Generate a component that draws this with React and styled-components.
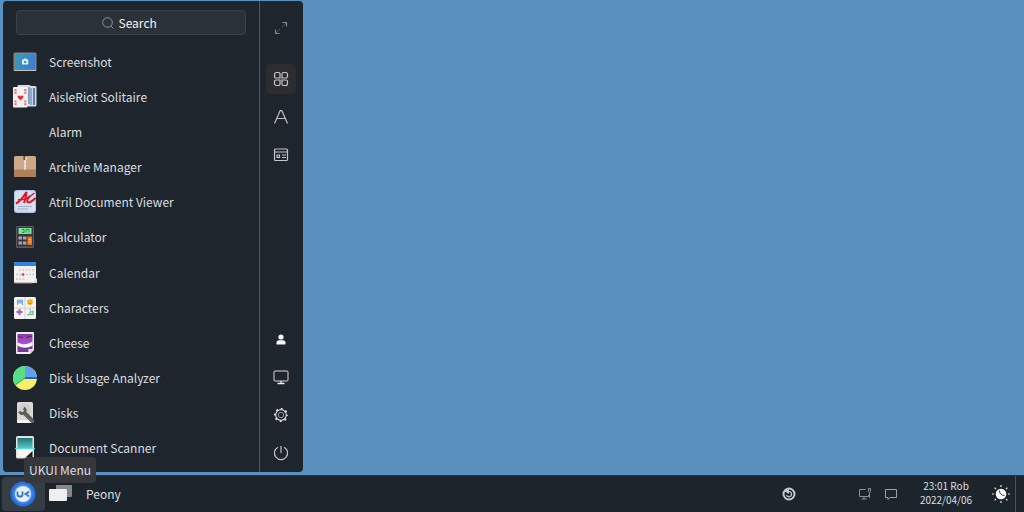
import React from "react";
import styled, { createGlobalStyle } from "styled-components";

const GlobalStyle = createGlobalStyle`
  *, *::before, *::after { box-sizing: border-box; }
  body {
    margin: 0;
    background: #5a90bf;
    color: #dcdee0;
    font: 400 12px/18px "Noto Sans CJK SC", "Noto Sans", sans-serif;
  }
  button, input { font: inherit; color: inherit; }
  button { border: 0; padding: 0; background: none; cursor: pointer; }
  svg { display: block; flex: none; }
`;

const Desktop = styled.div`
  display: flex;
  flex-direction: column;
  min-height: 100vh;
`;

const Workspace = styled.main`
  display: flex;
  flex: 1;
  padding: 1px 3px 3px;
`;

const Menu = styled.section`
  display: flex;
  width: 300px;
  background: #1e252c;
  border-radius: 4px;
`;

const Apps = styled.div`
  display: flex;
  flex: 1;
  flex-direction: column;
  padding: 9px 13px 6px;
  border-right: 1px solid #52585e;
`;

const SearchBox = styled.label`
  display: flex;
  align-items: center;
  justify-content: center;
  gap: 5px;
  height: 25px;
  border: 1px solid #3b4248;
  border-radius: 4px;
  background: #2a3138;
`;

const SearchInput = styled.input`
  width: 42px;
  padding: 0;
  border: 0;
  outline: 0;
  background: none;
  color: #f6f6f6;
  &::placeholder { color: inherit; opacity: 1; }
`;

const AppList = styled.ul`
  display: flex;
  flex: 1;
  flex-direction: column;
  margin: 9px 0 0;
  padding: 0;
  list-style: none;
`;

const AppItem = styled.li`
  display: flex;
  flex: 1;
`;

const AppButton = styled.button`
  display: flex;
  flex: 1;
  align-items: center;
  gap: 12px;
  margin-left: -3px;
  text-align: left;
`;

const IconSlot = styled.span`
  width: 24px;
  height: 24px;
`;

const Sidebar = styled.nav`
  display: flex;
  flex-direction: column;
  align-items: center;
  gap: 8px;
  width: 43px;
  padding: 12px 2px 4px 0;
`;

const SideButton = styled.button`
  display: grid;
  place-items: center;
  width: 30px;
  height: 30px;
  border-radius: 4px;
  background: ${(p) => (p.$active ? "#2d2c2f" : "none")};
`;

const SideGroup = styled.div`
  display: flex;
  flex-direction: column;
  gap: 8px;
  margin-top: ${(p) => (p.$end ? "auto" : "13px")};
`;

const Taskbar = styled.footer`
  display: flex;
  align-items: center;
  height: 37px;
  padding-left: 2px;
  border-top: 1px solid #24303a;
  background: #1d252c;
`;

const StartWrap = styled.div`
  position: relative;
`;

const StartButton = styled.button`
  display: grid;
  place-items: center;
  width: 43px;
  height: 34px;
  padding-right: 1px;
  border-radius: 4px;
  background: #353e45;
`;

const Tooltip = styled.span`
  position: absolute;
  left: 22px;
  bottom: 28px;
  padding: 4px 5px;
  border-radius: 4px;
  background: #37383cf5;
  white-space: nowrap;
`;

const TaskButton = styled.button`
  display: flex;
  align-items: center;
  gap: 14px;
  margin-left: 4px;
`;

const Tray = styled.div`
  display: flex;
  align-items: center;
  align-self: stretch;
  margin-left: auto;
`;

const TrayButton = styled.button`
  display: grid;
  place-items: center;
  width: 26px;
  height: 30px;
  margin-right: ${(p) => (p.$spaced ? "50px" : "0")};
`;

const Clock = styled.time`
  width: 66px;
  margin: 0 9px 2px;
  font-size: 10px;
  line-height: 14px;
  text-align: center;
`;

const ShowDesktop = styled.button`
  align-self: stretch;
  width: 9px;
  margin-left: 1px;
  border-left: 1px solid #4a5157;
`;

const Art = ({ children, size = 24 }) => (
  <svg width={size} height={size} viewBox={`0 0 ${size} ${size}`} fill="none" aria-hidden="true">
    {children}
  </svg>
);

const apps = [
  ["Screenshot", <>
    <defs><linearGradient id="shot" x2="1" y2=".3"><stop stopColor="#3a9db4" /><stop offset="1" stopColor="#3d7fcd" /></linearGradient></defs>
    <rect x="0.500" y="2.500" width="23" height="18.500" rx="1.500" fill="#85817f" />
    <path d="M1 20.500h22" stroke="#c4c2bf" />
    <rect x="2" y="4" width="20" height="15.500" fill="url(#shot)" />
    <path d="M9 9.500h1.500l.7-1h2l.7 1h1.300v5H9z" fill="#e6f1fb" />
    <circle cx="12.200" cy="12" r="1.300" fill="#4a8fc9" />
  </>],
  ["AisleRiot Solitaire", <>
    <rect x="8" y="1" width="15.500" height="20.500" rx="1.500" fill="#d9dde3" />
    <path d="M17.500 3v17M21 3v17" stroke="#5c81b5" strokeWidth="2.200" />
    <rect x="4.500" y="0" width="13" height="21" rx="1" fill="#d3dbe6" />
    <path d="M16 2v17" stroke="#6d8fbe" strokeWidth="1.500" />
    <rect x="0" y="2" width="14.500" height="20.500" rx="1" fill="#f3f1ef" />
    <path d="M7.500 15.500l-2.700-3c-.8-2 1.700-2.800 2.700-1 1-1.800 3.500-1 2.700 1z" fill="#e92b37" />
    <path d="M2.500 4v5M2.500 15.500v5M12.300 4v5M12.300 15.500v5" stroke="#ed6b72" strokeWidth="2" strokeDasharray="2 .8" />
  </>],
  ["Alarm", null],
  ["Archive Manager", <>
    <rect x="1" y="1" width="22" height="21" rx="1.500" fill="#cfa88a" />
    <path d="M1 14.500h22v6a1.500 1.500 0 0 1-1.500 1.500h-19A1.500 1.500 0 0 1 1 20.500z" fill="#b07f57" />
    <path d="M12 1v13.500" stroke="#f2eee9" strokeWidth="2" />
    <path d="M12 1v13.500" stroke="#b9aa9c" strokeDasharray=".7 .7" />
    <path d="M11.500 1v4" stroke="#5b5754" strokeWidth="2.200" />
    <path d="M13 2v3" stroke="#fff" />
  </>],
  ["Atril Document Viewer", <>
    <rect x="1" y="0" width="22" height="23" rx="3" fill="#b0c8e6" />
    <rect x="2" y="1" width="20" height="20.500" rx="2.500" fill="#d3e1f2" />
    <path d="M5 16.500h14M4 19h11" stroke="#9cafc6" />
    <path d="M3 13.500c4-2 7-6 10.500-11.500-.5 4-1 7-2.500 11" stroke="#dd1522" strokeWidth="2" />
    <path d="M5 9.500c5 1 10-1 16.500-6.500" stroke="#dd1522" strokeWidth="1.400" />
    <path d="M17 6c-2 2-3.500 4.500-2.500 6 1.500 1.500 5-1 8-4" stroke="#dd1522" strokeWidth="2" />
  </>],
  ["Calculator", <>
    <rect x="3" y="1" width="18" height="22" rx="1.500" fill="#5e5c64" />
    <rect x="4" y="2" width="16" height="19.500" fill="#38353f" />
    <rect x="5.500" y="3" width="13" height="6" fill="#77e995" />
    <path d="M9 4.500h2v3H9M13 7.500v-3h3v3" stroke="#388454" />
    <path d="M5.500 13h8M5.500 18h8" stroke="#aaa6a4" strokeWidth="3" strokeDasharray="3.500 1" />
    <rect x="14.500" y="11.500" width="4.500" height="8.500" rx=".5" fill="#f27712" />
    <path d="M15.700 14.500h2M15.700 17h2" stroke="#ffd1a5" />
  </>],
  ["Calendar", <>
    <path d="M1 2.500A1.500 1.500 0 0 1 2.500 1h19A1.500 1.500 0 0 1 23 2.500V22H2a1 1 0 0 1-1-1z" fill="#f2f1ef" />
    <path d="M1 2.500A1.500 1.500 0 0 1 2.500 1h19A1.500 1.500 0 0 1 23 2.500V5H1z" fill="#3181de" />
    <path d="M6 9h15M3 13.500h18M3 18h9" stroke="#c8c6c4" strokeWidth="1.700" strokeDasharray="1.700 1.600" />
    <path d="M1.500 22h18" stroke="#b88880" />
    <circle cx="10" cy="13.500" r="1.300" fill="#df3036" />
    <path d="M19.500 22H24v-5z" fill="#d6e0ce" />
  </>],
  ["Characters", <>
    <rect x="1" y="1" width="22" height="22" rx="1.500" fill="#f5f4f3" />
    <path d="M12 1v22M1 12h22" stroke="#d2cfcc" />
    <path d="M4.500 9V4h5v5M4.500 5.500h5M4.500 7h5M7 4v3" stroke="#72a4e8" />
    <circle cx="17" cy="6" r="3" fill="#f2bc26" />
    <path d="M15.500 5.500h.7M18 5.500h.7M15.500 7.500h3" stroke="#b87909" strokeWidth=".8" />
    <path d="M6.500 13v6M3.500 16h6" stroke="#9a68b4" strokeWidth="2" />
    <path d="M14 18.500c2 1 3.500-1 3.500-3 1.500 1 2.500 0 2.500-1v4h-3M16.500 13.500h1.500" stroke="#62bc8d" strokeWidth="1.200" />
  </>],
  ["Cheese", <>
    <path d="M4 1h16a1 1 0 0 1 1 1v17l-4 4H4a1 1 0 0 1-1-1V2a1 1 0 0 1 1-1z" fill="#f0ecf2" />
    <defs><linearGradient id="cheese" x2="0" y2="1"><stop stopColor="#8740a1" /><stop offset=".55" stopColor="#b74bd2" /><stop offset=".6" stopColor="#793994" /></linearGradient></defs>
    <path d="M4.500 3h15v15H15.500v3h-11z" fill="url(#cheese)" />
    <path d="M5 6c2-.7 3 0 4.500.5M13 6.500L19 5" stroke="#5a2470" strokeWidth="1.200" />
    <path d="M4.500 11.500c5 2.500 10 2.500 15-1v4c-5 3-10 3-15 0z" fill="#fff" />
    <path d="M17 19h4l-4 4z" fill="#cfcbd1" />
  </>],
  ["Disk Usage Analyzer", <>
    <circle cx="12" cy="12" r="12" fill="#f7ef69" />
    <path d="M12 12V0a12 12 0 0 1 12 12z" fill="#62a0ea" />
    <path d="M12 11h12v2H12z" fill="#2c66b0" />
    <path d="M12 12V0A12 12 0 0 0 2.300 19z" fill="#57df87" />
    <path d="M12 12L2.300 19" stroke="#35a85e" />
  </>],
  ["Disks", <>
    <rect x="4" y="1" width="16" height="21" rx="1.500" fill="#dbd9d6" />
    <path d="M4 19h16v2a1 1 0 0 1-1 1H5a1 1 0 0 1-1-1z" fill="#f5f4f2" />
    <circle cx="12" cy="9" r="6.500" fill="#cfcdca" />
    <path d="M6.500 10.500c1 2.500 3.500 2.500 5 1 1.300-1.500 1-3.500-.8-4.500" stroke="#5c5b5c" strokeWidth="2.800" />
    <path d="M12.500 13l7 7" stroke="#5c5b5c" strokeWidth="4" strokeLinecap="round" />
    <path d="M12 13.500l7 7" stroke="#727070" />
  </>],
  ["Document Scanner", <>
    <defs><linearGradient id="scan" x2="0" y2="1"><stop stopColor="#1c7779" /><stop offset="1" stopColor="#5bc2be" /></linearGradient></defs>
    <rect x="3" y="0" width="18" height="22.500" rx="1.500" fill="#e4e2df" />
    <rect x="4.500" y="2" width="15" height="10" fill="url(#scan)" />
    <path d="M4.500 13h15v3l-5 5h-10z" fill="#f7f6f5" />
    <path d="M19.500 15v6H13z" fill="#202020" />
    <path d="M2 12.500h20" stroke="#53e2d7" strokeWidth="1.300" />
  </>],
];

const views = [
  ["All applications", true, <path stroke="#c4c5c6" strokeWidth="1.200" d="M3.500 1.500h2a1.500 1.500 0 0 1 1.500 1.500v4H3a1.500 1.500 0 0 1-1.500-1.500v-2a2 2 0 0 1 2-2zM10.500 1.500h2a2 2 0 0 1 2 2v2A1.500 1.500 0 0 1 13 7H9V3a1.500 1.500 0 0 1 1.500-1.500zM3 9h4v4a1.500 1.500 0 0 1-1.500 1.500h-2a2 2 0 0 1-2-2v-2A1.500 1.500 0 0 1 3 9zM9 9h4a1.500 1.500 0 0 1 1.500 1.500v2a2 2 0 0 1-2 2h-2A1.500 1.500 0 0 1 9 13z" />],
  ["Sort by letter", false, <path stroke="#bec0c2" strokeWidth="1.200" d="M1.500 14.500L7.200 1.600h1.600l5.700 12.900M4 9.500h8" />],
  ["Sort by category", false, <g stroke="#c4c5c6" strokeWidth="1.200"><rect x="1.500" y="2" width="13" height="11.500" rx="1" /><path d="M2 5h12M9 8h4M9 10.500h4" /><path d="M4 8h2.500v2.500H4z" /></g>],
];

const system = [
  ["User", <g fill="#f6f6f6"><circle cx="8" cy="6" r="2.600" /><path d="M3.500 13.500v-2c0-1.300 1-2.300 2.300-2.300h4.400c1.300 0 2.300 1 2.300 2.300v2z" /></g>],
  ["Computer", <><rect x="1" y="2" width="14" height="10" rx="1" stroke="#d8d9da" /><path d="M8 12v2.500M4.500 14.500h7" stroke="#eee" strokeWidth="1.300" /></>],
  ["Settings", <><circle cx="8" cy="8" r="5.300" stroke="#cfd0d1" strokeWidth="1.200" /><circle cx="8" cy="8" r="2.700" stroke="#8e9296" /><circle cx="8" cy="8" r="6.300" stroke="#dedfe0" strokeWidth="1.600" strokeDasharray="2 2.948" strokeDashoffset="1" /></>],
  ["Power", <path d="M8 1v7M5 2.200a6.600 6.600 0 1 0 6 0" stroke="#bfc1c3" strokeWidth="1.200" />],
];

export default function App() {
  return (
    <>
      <GlobalStyle />
      <Desktop>
        <Workspace>
          <Menu aria-label="Start menu">
            <Apps>
              <SearchBox>
                <Art size={12}><circle cx="5.500" cy="5.500" r="4.800" stroke="#8e9397" /><path d="M9 9l2.500 2.500" stroke="#8e9397" /></Art>
                <SearchInput aria-label="Search" placeholder="Search" />
              </SearchBox>
              <AppList>
                {apps.map(([name, art]) => (
                  <AppItem key={name}>
                    <AppButton type="button">
                      <IconSlot>{art && <Art>{art}</Art>}</IconSlot>
                      {name}
                    </AppButton>
                  </AppItem>
                ))}
              </AppList>
            </Apps>
            <Sidebar aria-label="Menu views">
              <SideButton type="button" aria-label="Full screen">
                <Art size={14}><path d="M8.500 1.500h4v4M1.500 8.500v4h4" stroke="#858a8e" strokeWidth="1.200" /><path d="M12.500 1.500L8 6M1.500 12.500L6 8" stroke="#6b7176" strokeDasharray="1.500 1" /></Art>
              </SideButton>
              <SideGroup>
                {views.map(([name, active, art]) => (
                  <SideButton key={name} type="button" aria-label={name} $active={active}><Art size={16}>{art}</Art></SideButton>
                ))}
              </SideGroup>
              <SideGroup $end>
                {system.map(([name, art]) => (
                  <SideButton key={name} type="button" aria-label={name}><Art size={16}>{art}</Art></SideButton>
                ))}
              </SideGroup>
            </Sidebar>
          </Menu>
        </Workspace>
        <Taskbar>
          <StartWrap>
            <StartButton type="button" aria-label="UKUI Menu">
              <Art size={26}>
                <circle cx="13" cy="13" r="12.500" fill="#286fdf" />
                <circle cx="13" cy="13" r="10" fill="#3f8af0" />
                <circle cx="13" cy="13" r="8" fill="#e8edf4" />
                <path d="M7.500 10.500v3a2 2 0 0 0 2 2h1a2 2 0 0 0 2-2v-3M14.500 13h1.500l3-2.500M16 13l3 2.500" stroke="#2c75d3" strokeWidth="1.800" />
              </Art>
            </StartButton>
            <Tooltip role="tooltip">UKUI Menu</Tooltip>
          </StartWrap>
          <TaskButton type="button">
            <svg width="23" height="18" viewBox="0 0 23 18" aria-hidden="true">
              <rect x="7" y="0" width="16" height="12" rx="1" fill="#85898d" />
              <rect x="0" y="4" width="18" height="12" rx="1" fill="#efefef" />
            </svg>
            Peony
          </TaskButton>
          <Tray>
            <TrayButton type="button" aria-label="Updates" $spaced>
              <Art size={14}><circle cx="7" cy="7" r="5.500" stroke="#c7c9cb" strokeWidth="2" /><path d="M4.500 8A2.600 2.600 0 1 0 7 4.500" stroke="#c7c9cb" strokeWidth="1.200" /><path d="M2 4l5-2v5z" fill="#c7c9cb" /></Art>
            </TrayButton>
            <TrayButton type="button" aria-label="Network">
              <Art size={14}><path d="M7.500 2.500H1.500v7h9V8M6 9.500V12M3.500 12h5" stroke="#8a9095" /><path d="M10.500 1.500v3a1 1 0 0 0 2 0v-3zM11.500 6v5" stroke="#8a9095" /></Art>
            </TrayButton>
            <TrayButton type="button" aria-label="Notifications">
              <Art size={14}><path d="M1.500 2.500h11v8H6l-2 2v-2H1.500z" stroke="#9ca1a5" /></Art>
            </TrayButton>
            <Clock dateTime="2022-04-06T23:01">23:01 Rob<br />2022/04/06</Clock>
            <TrayButton type="button" aria-label="Night mode">
              <Art size={20}>
                <circle cx="10" cy="10" r="5.300" fill="#fff" />
                <path d="M8.500 6.500c-.2 3 2 5 5 5" stroke="#1d252c" strokeWidth=".9" />
                <path d="M10 1v2M10 17v2M1 10h2M17 10h2M3.600 3.600L5 5M15 15l1.400 1.400M3.600 16.400L5 15M15 5l1.400-1.400" stroke="#e5e6e7" strokeWidth="1.200" />
              </Art>
            </TrayButton>
            <ShowDesktop type="button" aria-label="Show desktop" />
          </Tray>
        </Taskbar>
      </Desktop>
    </>
  );
}
